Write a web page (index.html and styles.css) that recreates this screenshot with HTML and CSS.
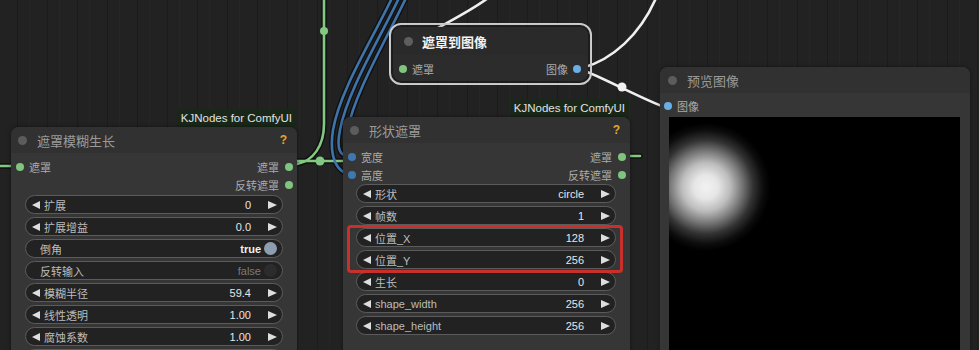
FILE: index.html
```html
<!DOCTYPE html>
<html>
<head>
<meta charset="utf-8">
<link rel="stylesheet" href="styles.css">
</head>
<body>
<div class="canvas">
  <svg class="wires" width="979" height="350" viewBox="0 0 979 350">
    <g fill="none" stroke="#111" stroke-width="5.5" stroke-linecap="round">
      <path d="M0,166 L14,166"/>
      <path d="M297,164 C313,161 324,146 324,124 L324,-5"/>
      <path d="M297,161 L345,161"/>
      <path d="M628,156 L640,156"/>
      <path d="M392,-2 C372,40 340,90 333,130 C329,156 336,174 352,174"/>
      <path d="M399,-2 C379,40 347,92 340,130 C336,150 340,157 352,157"/>
      <path d="M406,-2 C386,40 354,94 347,132 C344,150 345,157 352,157"/>
    </g>
    <g fill="none" stroke-width="2.6" stroke-linecap="round">
      <path class="g" d="M0,166 L14,166"/>
      <path class="g" d="M297,164 C313,161 324,146 324,124 L324,-5"/>
      <path class="g" d="M297,161 L345,161"/>
      <path class="g" d="M628,156 L640,156"/>
      <path class="b" d="M392,-2 C372,40 340,90 333,130 C329,156 336,174 352,174"/>
      <path class="b" d="M399,-2 C379,40 347,92 340,130 C336,150 340,157 352,157"/>
      <path class="b" d="M406,-2 C386,40 354,94 347,132 C344,150 345,157 352,157"/>
      <path class="w" d="M488,-2 C472,10 452,20 434,30"/>
      <path class="w" d="M582,68 C612,60 640,35 656,-2"/>
      <path class="w" d="M582,70 C600,76 640,98 662,106"/>
    </g>
    <circle cx="324" cy="31" r="4" fill="#82c882"/>
    <circle cx="320" cy="161" r="4.5" fill="#82c882"/>
    <circle cx="622" cy="87" r="4.5" fill="#f2f2f2"/>
  </svg>

  <!-- 遮罩模糊生长 -->
  <div class="node-wrap wrap-blur">
    <div class="badge">KJNodes for ComfyUI</div>
    <div class="node node-tall">
      <div class="title"><span class="tdot"></span><span class="ttext">遮罩模糊生长</span><span class="help">?</span></div>
      <div class="slots">
        <div class="slot-row"><div class="in"><span class="sdot green"></span>遮罩</div><div class="out">遮罩<span class="sdot green"></span></div></div>
        <div class="slot-row"><div class="in"></div><div class="out">反转遮罩<span class="sdot green"></span></div></div>
      </div>
      <div class="widgets">
        <div class="widget"><span class="al"></span><span class="lbl">扩展</span><span class="val">0</span><span class="ar"></span></div>
        <div class="widget"><span class="al"></span><span class="lbl">扩展增益</span><span class="val">0.0</span><span class="ar"></span></div>
        <div class="widget toggle"><span class="lbl">倒角</span><span class="val on">true</span><span class="knob on"></span></div>
        <div class="widget toggle"><span class="lbl">反转输入</span><span class="val off">false</span><span class="knob"></span></div>
        <div class="widget"><span class="al"></span><span class="lbl">模糊半径</span><span class="val">59.4</span><span class="ar"></span></div>
        <div class="widget"><span class="al"></span><span class="lbl">线性透明</span><span class="val">1.00</span><span class="ar"></span></div>
        <div class="widget"><span class="al"></span><span class="lbl">腐蚀系数</span><span class="val">1.00</span><span class="ar"></span></div>
        <div class="widget"></div>
      </div>
    </div>
  </div>

  <!-- 形状遮罩 -->
  <div class="node-wrap wrap-shape">
    <div class="badge">KJNodes for ComfyUI</div>
    <div class="node node-tall">
      <div class="title"><span class="tdot"></span><span class="ttext">形状遮罩</span><span class="help">?</span></div>
      <div class="slots">
        <div class="slot-row"><div class="in"><span class="sdot blue"></span>宽度</div><div class="out">遮罩<span class="sdot green"></span></div></div>
        <div class="slot-row"><div class="in"><span class="sdot blue"></span>高度</div><div class="out">反转遮罩<span class="sdot green"></span></div></div>
      </div>
      <div class="widgets">
        <div class="widget"><span class="al"></span><span class="lbl">形状</span><span class="val">circle</span><span class="ar"></span></div>
        <div class="widget"><span class="al"></span><span class="lbl">帧数</span><span class="val">1</span><span class="ar"></span></div>
        <div class="widget"><span class="al"></span><span class="lbl">位置_X</span><span class="val">128</span><span class="ar"></span></div>
        <div class="widget"><span class="al"></span><span class="lbl">位置_Y</span><span class="val">256</span><span class="ar"></span></div>
        <div class="widget"><span class="al"></span><span class="lbl">生长</span><span class="val">0</span><span class="ar"></span></div>
        <div class="widget"><span class="al"></span><span class="lbl">shape_width</span><span class="val">256</span><span class="ar"></span></div>
        <div class="widget"><span class="al"></span><span class="lbl">shape_height</span><span class="val">256</span><span class="ar"></span></div>
      </div>
    </div>
  </div>

  <!-- 遮罩到图像 (selected) -->
  <div class="selected">
    <div class="node node-dark">
      <div class="title title-sel"><span class="tdot"></span><span class="ttext sel">遮罩到图像</span></div>
      <div class="slots slots-small">
        <div class="slot-row"><div class="in"><span class="sdot green"></span>遮罩</div><div class="out">图像<span class="sdot lblue"></span></div></div>
      </div>
    </div>
  </div>

  <!-- 预览图像 -->
  <div class="node preview">
    <div class="title"><span class="tdot"></span><span class="ttext">预览图像</span></div>
    <div class="slot-row pslot"><div class="in"><span class="sdot lblue"></span>图像</div></div>
    <div class="image"></div>
  </div>

  <div class="highlight"></div>
</div>
</body>
</html>
```
FILE: styles.css
```css
* { box-sizing: border-box; }
body {
  margin: 0;
  background: #222;
  font-family: "Liberation Sans", "Noto Sans CJK SC", sans-serif;
}
.canvas {
  position: relative;
  width: 979px;
  height: 350px;
  overflow: hidden;
  background-color: #222;
  background-image: repeating-linear-gradient(90deg, rgba(0,0,0,0) 0 17px, rgba(0,0,0,0.2) 17px 18px, rgba(0,0,0,0) 18px 29px, rgba(255,255,255,0.02) 29px 30px);
}
.wires { position: absolute; left: 0; top: 0; }
.wires .g { stroke: #82c882; }
.wires .b { stroke: #3f74ab; }
.wires .w { stroke: #efefef; }

.node-wrap {
  position: absolute;
  display: flex;
  flex-direction: column;
  align-items: flex-end;
}
.wrap-blur { left: 11px; top: 109px; width: 286px; }
.wrap-shape { left: 343px; top: 99px; width: 287px; }

.badge {
  height: 18px;
  line-height: 18px;
  padding: 0 4px;
  margin-right: 1px;
  font-size: 11.5px;
  color: #e2e2e2;
  background: #192719;
}
.node {
  width: 100%;
  background: #363636;
  border-radius: 8px;
  box-shadow: 0 0 4px rgba(0,0,0,0.45);
}
.node-tall { height: 270px; }

.title {
  height: 26px;
  display: flex;
  align-items: center;
  padding: 0 10px 0 7px;
  background: #313131;
  border-radius: 8px 8px 0 0;
  font-size: 13px;
  color: #9a9a9a;
}
.tdot {
  width: 9px;
  height: 9px;
  border-radius: 50%;
  background: #5c5c5c;
  margin-right: 10px;
  flex: none;
}
.help {
  margin-left: auto;
  color: #e3a531;
  font-weight: bold;
  font-size: 12px;
}
.slots { padding-top: 5px; }
.slot-row {
  height: 18px;
  display: flex;
  justify-content: space-between;
  align-items: center;
  font-size: 11px;
  color: #ababab;
}
.in { display: flex; align-items: center; padding-left: 5px; }
.out { display: flex; align-items: center; padding-right: 4px; }
.in .sdot { margin-right: 5px; }
.out .sdot { margin-left: 6px; }
.sdot { width: 8px; height: 8px; border-radius: 50%; flex: none; }
.green { background: #7fc47f; }
.blue { background: #3d78b0; }
.lblue { background: #6aaee6; }

.widgets {
  display: flex;
  flex-direction: column;
  gap: 3px;
  padding: 1px 14px 0 14px;
}
.wrap-shape .widgets { padding-left: 13px; padding-top: 0; }
.widget {
  height: 19px;
  flex: none;
  display: flex;
  align-items: center;
  border: 1px solid #5b5b5b;
  border-radius: 10px;
  background: #222;
  padding: 0 5px 0 6px;
  font-size: 11px;
}
.al {
  width: 0; height: 0;
  border-top: 4.5px solid transparent;
  border-bottom: 4.5px solid transparent;
  border-right: 8px solid #dedede;
  margin-right: 4px;
  flex: none;
}
.ar {
  width: 0; height: 0;
  border-top: 4.5px solid transparent;
  border-bottom: 4.5px solid transparent;
  border-left: 9px solid #dedede;
  margin-left: 17px;
  flex: none;
}
.lbl { color: #bdbdbd; flex: 1; white-space: nowrap; }
.val { color: #e6e6e6; }
.toggle { padding-left: 14px; padding-right: 5px; }
.val.on { font-weight: bold; color: #f0f0f0; }
.val.off { color: #7a7a7a; }
.knob {
  width: 13px; height: 13px;
  border-radius: 50%;
  background: #2c2c2c;
  margin-left: 3px;
  flex: none;
}
.knob.on { background: #8d9eb1; }

.selected {
  position: absolute;
  left: 389px;
  top: 23px;
  width: 203px;
  border: 2px solid #d2d2d2;
  border-radius: 12px;
  padding: 2px;
}
.node-dark { background: #2c2c2c; border-radius: 8px; padding-bottom: 3px; }
.title-sel { height: 28px; background: #2a2a2a; padding-left: 11px; }
.title-sel .tdot { margin-right: 9px; background: #5e5e5e; }
.ttext.sel { color: #f2f2f2; font-weight: bold; }
.slots-small .in { padding-left: 6px; }
.slots-small .out { padding-right: 7px; }
.slots-small .out .sdot { margin-left: 5px; }

.preview {
  position: absolute;
  left: 660px;
  top: 67px;
  width: 310px;
  height: 300px;
  background: #363636;
}
.preview .title { padding-left: 8px; }
.pslot { margin-top: 4px; }
.pslot .in { padding-left: 4px; }
.image {
  margin: 2px 10px 0 9px;
  height: 240px;
  background: radial-gradient(circle at 37px 70px, #f2f2f2 0, #e6e6e6 12px, #bdbdbd 24px, #777 36px, #333 47px, #0d0d0d 57px, #000 64px);
}

.highlight {
  position: absolute;
  left: 347px;
  top: 225px;
  width: 276px;
  height: 48px;
  border: 3px solid #c9302b;
  border-radius: 4px;
}
```
